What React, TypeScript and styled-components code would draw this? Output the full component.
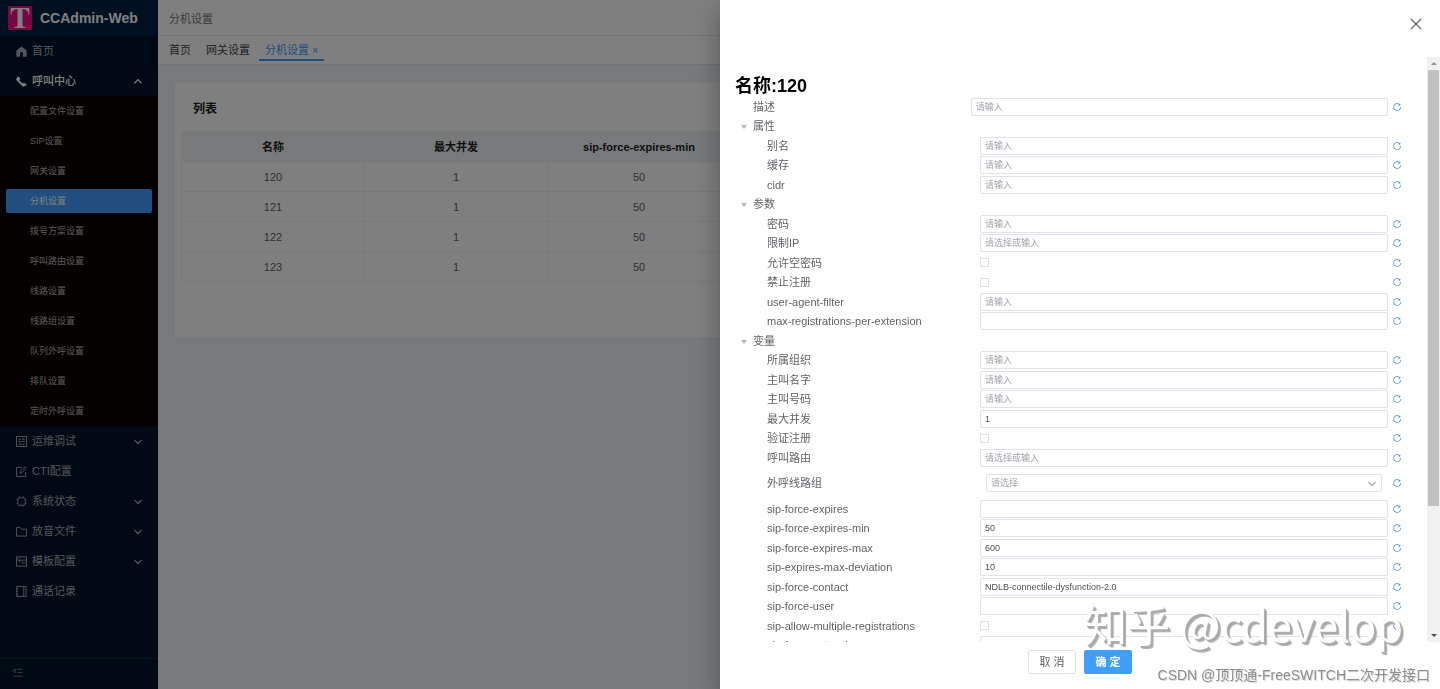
import React from "react";
import styled, { createGlobalStyle, css } from "styled-components";

const GlobalStyle = createGlobalStyle`
  *, *::before, *::after { box-sizing: border-box; }
  body {
    margin: 0;
    background: #f0f2f5;
    color: #606266;
    font: 11px/16px "Liberation Sans", "Noto Sans CJK SC", sans-serif;
  }
  button, input, select { font-family: inherit; }
  a { color: inherit; text-decoration: none; }
  ul { list-style: none; margin: 0; padding: 0; }
`;

/* ---------- application shell ---------- */

const Shell = styled.div`
  display: flex;
  height: 100vh;
  overflow: hidden;
`;

const Sidebar = styled.aside`
  display: flex;
  flex-direction: column;
  flex: none;
  width: 158px;
  background: #001529;
`;

const Brand = styled.div`
  display: flex;
  align-items: center;
  gap: 8px;
  height: 36px;
  padding-left: 8px;
  background: #002140;
  color: #fff;
  font-size: 14px;
  font-weight: 700;
`;

const Logo = styled.svg`
  width: 24px;
  height: 24px;
  background: #f00a88;
`;

const Menu = styled.nav`
  flex: 1;
`;

const MenuLink = styled.a<{ $open?: boolean }>`
  display: flex;
  align-items: center;
  gap: 5px;
  height: 30px;
  padding: 0 15px 0 16px;
  color: ${(p) => (p.$open ? "#fff" : "#a6acb3")};
  font-weight: ${(p) => (p.$open ? 500 : 400)};
`;

const MenuText = styled.span`
  flex: 1;
`;

const SubMenu = styled.ul`
  background: #0c0203;
`;

const SubItem = styled.li`
  height: 30px;
  padding: 3px 6px;
`;

const SubLink = styled.a<{ $active?: boolean }>`
  display: block;
  height: 24px;
  padding-left: 24px;
  border-radius: 2px;
  color: ${(p) => (p.$active ? "#fff" : "#b4b2b2")};
  background: ${(p) => (p.$active ? "#409eff" : "transparent")};
  font-size: 9px;
  line-height: 24px;
`;

const Collapse = styled.button`
  display: flex;
  align-items: center;
  height: 31px;
  padding: 0 12px 3px;
  border: 0;
  border-top: 1px solid #002c50;
  background: none;
  color: #5d7fa8;
`;

const Icon = styled.svg<{ $size?: number }>`
  flex: none;
  width: ${(p) => p.$size ?? 11}px;
  height: ${(p) => p.$size ?? 11}px;
  fill: none;
  stroke: currentColor;
  stroke-width: 1;
`;

const Main = styled.main`
  flex: 1;
  min-width: 0;
`;

const TopBar = styled.header`
  display: flex;
  align-items: center;
  height: 36px;
  padding: 2px 11px 0;
  border-bottom: 1px solid #ececec;
  background: #fff;
  color: #777;
`;

const TabBar = styled.nav`
  display: flex;
  gap: 3px;
  height: 29px;
  padding: 2px 5px 3px;
  border-bottom: 1px solid #e2e5e9;
  background: #fff;
`;

const Tab = styled.a<{ $active?: boolean }>`
  display: flex;
  align-items: center;
  gap: 3px;
  padding: 3px 6px 0;
  border-bottom: 2px solid ${(p) => (p.$active ? "#409eff" : "transparent")};
  color: ${(p) => (p.$active ? "#409eff" : "#444")};
`;

const TabClose = styled.span`
  font-size: 11px;
`;

const Card = styled.section`
  margin: 17px;
  min-height: 255px;
  padding: 15px 6px;
  background: #fff;
`;

const CardTitle = styled.h2`
  margin: 0 12px 10px;
  color: #222;
  font-size: 12px;
  font-weight: 700;
  line-height: 24px;
`;

const Table = styled.table`
  width: 100%;
  table-layout: fixed;
  border-collapse: collapse;
  text-align: center;
  th, td {
    height: 30px;
    padding: 0;
    border: 1px solid #f1f2f5;
  }
  th {
    background: #f0f2f5;
    color: #222;
  }
`;

const NarrowTh = styled.th`
  width: 183px;
`;

const Mask = styled.div`
  position: fixed;
  inset: 0;
  background: rgba(0, 0, 0, 0.5);
`;

/* ---------- drawer ---------- */

const Drawer = styled.form`
  position: fixed;
  inset: 0 0 0 auto;
  display: flex;
  flex-direction: column;
  width: 50%;
  background: #fff;
  box-shadow: 0 8px 10px -5px rgba(0, 0, 0, 0.2), 0 16px 24px 2px rgba(0, 0, 0, 0.14),
    0 6px 30px 5px rgba(0, 0, 0, 0.12);
`;

const DrawerHead = styled.header`
  display: flex;
  justify-content: flex-end;
  height: 57px;
  padding: 18px 18px 0;
`;

const IconButton = styled.button`
  display: flex;
  align-items: center;
  justify-content: center;
  flex: none;
  width: 12px;
  height: 12px;
  padding: 0;
  border: 0;
  background: none;
  color: #606266;
`;

const ResetButton = styled(IconButton)`
  width: 18px;
  height: 18px;
  color: #2f86d6;
`;

const DrawerBody = styled.div`
  display: flex;
  flex: 1;
  min-height: 0;
`;

const ScrollArea = styled.div`
  flex: 1;
  min-width: 0;
  overflow: hidden;
  padding: 17px 21px 0 15px;
`;

const Heading = styled.h1`
  margin: 0;
  color: #000;
  font-size: 18px;
  font-weight: 700;
  line-height: 24px;
`;

const Row = styled.div<{ $child?: boolean; $tall?: boolean }>`
  display: flex;
  align-items: center;
  height: 19px;
  padding-left: ${(p) => (p.$child ? 14 : 0)}px;
  &:nth-child(odd) { height: 20px; }
  ${Heading} + & { height: 18px; }
  ${(p) =>
    p.$tall &&
    css`
      &&& { height: 32px; }
    `}
`;

const Toggle = styled.span`
  display: flex;
  flex: none;
  justify-content: center;
  width: 18px;
  padding-top: 2px;
`;

const Caret = styled.i`
  border: 3px solid transparent;
  border-top: 4px solid #b4b6ba;
  border-bottom: 0;
`;

const Pair = styled.div`
  display: grid;
  grid-template-columns: 12fr 23fr;
  align-items: center;
  flex: 1;
  min-width: 0;
`;

const Label = styled.label`
  white-space: nowrap;
`;

const boxed = css`
  display: block;
  width: 100%;
  height: 18px;
  padding: 0 4px;
  border: 1px solid #dfe2e8;
  border-radius: 2px;
  outline: 0;
  background: #fff;
  color: #505256;
  font-size: 9px;
`;

const TextInput = styled.input`
  ${boxed}
  &::placeholder { color: #a0a3a9; opacity: 1; }
`;

const SelectWrap = styled.div`
  display: grid;
  align-items: center;
  margin: 0 6px;
  color: #a8abb2;
  > * { grid-area: 1 / 1; }
  > svg { justify-self: end; margin-right: 5px; pointer-events: none; z-index: 1; }
`;

const Select = styled.select`
  ${boxed}
  appearance: none;
  color: #a0a3a9;
`;

const Checkbox = styled.input`
  display: block;
  appearance: none;
  width: 9px;
  height: 9px;
  margin: 0;
  border: 1px solid #dcdfe6;
  border-radius: 1px;
  background: #fff;
`;

const ScrollBar = styled.div`
  display: flex;
  flex-direction: column;
  flex: none;
  width: 13px;
  background: #f1f1f1;
`;

const ScrollArrow = styled.span<{ $down?: boolean }>`
  display: flex;
  align-items: center;
  justify-content: center;
  height: 13px;
  &::before {
    content: "";
    border: 3px solid transparent;
    ${(p) =>
      p.$down
        ? "border-top-color: #505050; border-bottom: 0;"
        : "border-bottom-color: #909090; border-top: 0;"}
  }
`;

const ScrollTrack = styled.div`
  flex: 1;
  padding: 0 1px;
`;

const ScrollThumb = styled.div`
  height: 78%;
  background: #c1c1c1;
`;

const DrawerFoot = styled.footer`
  display: flex;
  justify-content: center;
  gap: 8px;
  height: 47px;
  padding-top: 8px;
`;

const Button = styled.button<{ $primary?: boolean }>`
  width: 48px;
  height: 24px;
  padding: 0;
  border: 1px solid ${(p) => (p.$primary ? "#409eff" : "#dcdfe6")};
  border-radius: 2px;
  background: ${(p) => (p.$primary ? "#409eff" : "#fff")};
  color: ${(p) => (p.$primary ? "#fff" : "#606266")};
  font-size: 11px;
  line-height: 20px;
  font-weight: ${(p) => (p.$primary ? 700 : 400)};
`;

/* ---------- watermarks ---------- */

const Watermark = styled.div`
  position: fixed;
  right: 37px;
  bottom: 36px;
  color: #fff;
  font: 43px/60px "Noto Sans CJK SC", sans-serif;
  text-shadow: 1px 1px 0 #b0b0b0, 2px 2px 0 #a8a8a8, 3px 3px 1px #b0b0b0;
  pointer-events: none;
`;

const Credit = styled.div`
  position: fixed;
  right: 10px;
  bottom: 4px;
  color: #8e8e8e;
  font: 14px/20px "Liberation Sans", "Noto Sans CJK SC", sans-serif;
  text-shadow: 1px 1px 0 #dcdcdc;
  pointer-events: none;
`;

/* ---------- icons ---------- */

const glyphs: Record<string, React.ReactNode> = {
  home: (
    <path fill="currentColor" stroke="none" d="M6 .5.4 5V11.700H4.500V8q0-1.500 1.500-1.500T7.500 8v3.700h4.100V5z" />
  ),
  phone: (
    <path
      fill="currentColor"
      stroke="none"
      d="M1.700.6.2 3.900q-.1.4.2.700l7 6.900q.3.200.6.100l3.500-1.500q.4-.3.100-.700L9.400 7.500q-.3-.3-.6-.1L7.100 8.300 3.700 4.800l.9-1.700q.1-.3-.1-.6L2.400.5q-.4-.3-.7.1z"
    />
  ),
  tools: (
    <>
      <rect x=".5" y=".5" width="11" height="11" />
      <path d="M2.500 3.500h3M7.500 2.500v2M7.500 3.500h2M2.500 6h2v1.500M6 6h3.500M2.500 9h4M8.500 8v2" />
    </>
  ),
  edit: (
    <>
      <path d="M6.500 1.500h-6v10h10v-5" />
      <path d="m4.500 7.800.3-2 4.900-4.900 1.500 1.500-4.800 4.900z" />
    </>
  ),
  cpu: (
    <>
      <rect x="2" y="2" width="8" height="8" rx="1.500" />
      <path d="M4 .5V2m4-1.500V2M4 10v1.500M8 10v1.500M.5 4H2M.5 8H2m8-4h1.500M10 8h1.500" />
    </>
  ),
  folder: <path d="M.5 1.500h4l1.500 2h5.500v7.500H.5z" />,
  template: (
    <>
      <rect x=".5" y="1" width="11" height="10" />
      <path d="M.5 4.500h11M4 4.500V7M2.500 2.500v1M6 7.500h4" />
    </>
  ),
  notebook: (
    <>
      <rect x="1" y=".5" width="10" height="11" />
      <path d="M8.500.5v11M0 3h2M0 6h2M0 9h2" />
    </>
  ),
  collapse: <path d="M5 2.500h6.500M6 6h5.500M1.500 10h10M3.500 2 1 4.200l2.500 2.200z" />,
  down: <path strokeWidth="1.400" d="m2.500 4.200 4 4 4-4" />,
  up: <path strokeWidth="1.400" d="m2.500 8 4-4 4 4" />,
  close: <path strokeWidth="1.200" d="m1 1 10 10M11 1 1 11" />,
};

const Glyph = ({ name, size }: { name: string; size?: number }) => (
  <Icon viewBox="0 0 12 12" $size={size} aria-hidden="true">
    {glyphs[name]}
  </Icon>
);

const Refresh = () => (
  <Icon viewBox="0 0 1024 1024" $size={10} aria-hidden="true">
    <path
      fill="currentColor"
      stroke="none"
      d="M784.512 230.272v-50.560a32 32 0 1 1 64 0v149.056a32 32 0 0 1-32 32H667.520a32 32 0 1 1 0-64h92.992A320 320 0 1 0 524.800 833.152a320 320 0 0 0 320-320h64a384 384 0 0 1-384 384 384 384 0 0 1-384-384 384 384 0 0 1 643.712-282.880z"
    />
  </Icon>
);

/* ---------- data ---------- */

const submenu = [
  "配置文件设置", "SIP设置", "网关设置", "分机设置", "拨号方案设置", "呼叫路由设置",
  "线路设置", "线路组设置", "队列外呼设置", "排队设置", "定时外呼设置",
];

const lowerMenu = [
  { icon: "tools", text: "运维调试", more: true },
  { icon: "edit", text: "CTI配置" },
  { icon: "cpu", text: "系统状态", more: true },
  { icon: "folder", text: "放音文件", more: true },
  { icon: "template", text: "模板配置", more: true },
  { icon: "notebook", text: "通话记录" },
];

type Field = {
  label: string;
  kind?: "group" | "check" | "select";
  top?: boolean;
  hint?: string;
  value?: string;
};

const INPUT = "请输入";
const PICK = "请选择或输入";

const fields: Field[] = [
  { label: "描述", top: true, hint: INPUT },
  { label: "属性", kind: "group" },
  { label: "别名", hint: INPUT },
  { label: "缓存", hint: INPUT },
  { label: "cidr", hint: INPUT },
  { label: "参数", kind: "group" },
  { label: "密码", hint: INPUT },
  { label: "限制IP", hint: PICK },
  { label: "允许空密码", kind: "check" },
  { label: "禁止注册", kind: "check" },
  { label: "user-agent-filter", hint: INPUT },
  { label: "max-registrations-per-extension" },
  { label: "变量", kind: "group" },
  { label: "所属组织", hint: INPUT },
  { label: "主叫名字", hint: INPUT },
  { label: "主叫号码", hint: INPUT },
  { label: "最大并发", value: "1" },
  { label: "验证注册", kind: "check" },
  { label: "呼叫路由", hint: PICK },
  { label: "外呼线路组", kind: "select" },
  { label: "sip-force-expires" },
  { label: "sip-force-expires-min", value: "50" },
  { label: "sip-force-expires-max", value: "600" },
  { label: "sip-expires-max-deviation", value: "10" },
  { label: "sip-force-contact", value: "NDLB-connectile-dysfunction-2.0" },
  { label: "sip-force-user" },
  { label: "sip-allow-multiple-registrations", kind: "check" },
  { label: "sip-force-extension" },
];

const Control = ({ field, id }: { field: Field; id: string }) => {
  if (field.kind === "check") return <Checkbox id={id} type="checkbox" />;
  if (field.kind === "select")
    return (
      <SelectWrap>
        <Select id={id}>
          <option>请选择</option>
        </Select>
        <Glyph name="down" size={11} />
      </SelectWrap>
    );
  return <TextInput id={id} placeholder={field.hint} defaultValue={field.value} />;
};

const FieldRow = ({ field, id }: { field: Field; id: string }) => {
  if (field.kind === "group")
    return (
      <Row>
        <Toggle><Caret /></Toggle>
        <span>{field.label}</span>
      </Row>
    );
  return (
    <Row $child={!field.top} $tall={field.kind === "select"}>
      <Toggle />
      <Pair>
        <Label htmlFor={id}>{field.label}</Label>
        <Control field={field} id={id} />
      </Pair>
      <ResetButton type="button" aria-label="重置"><Refresh /></ResetButton>
    </Row>
  );
};

export default function App() {
  return (
    <>
      <GlobalStyle />
      <Shell>
        <Sidebar>
          <Brand>
            <Logo viewBox="0 0 24 24" aria-hidden="true">
              <path
                fill="#fff"
                d="M3 2h18l.6 6.500h-1C20 4.500 18.500 3.300 14.500 3.200v15.300c0 2 .8 2.400 3 2.500v1h-11v-1c2.200-.1 3-.5 3-2.500V3.200C5.500 3.300 4 4.500 3.400 8.500h-1z"
              />
            </Logo>
            CCAdmin-Web
          </Brand>
          <Menu>
            <MenuLink href="#home"><Glyph name="home" /><MenuText>首页</MenuText></MenuLink>
            <MenuLink href="#call" $open>
              <Glyph name="phone" /><MenuText>呼叫中心</MenuText><Glyph name="up" />
            </MenuLink>
            <SubMenu>
              {submenu.map((text) => (
                <SubItem key={text}>
                  <SubLink href="#sub" $active={text === "分机设置"}>{text}</SubLink>
                </SubItem>
              ))}
            </SubMenu>
            {lowerMenu.map((m) => (
              <MenuLink key={m.text} href="#menu">
                <Glyph name={m.icon} />
                <MenuText>{m.text}</MenuText>
                {m.more && <Glyph name="down" />}
              </MenuLink>
            ))}
          </Menu>
          <Collapse type="button" aria-label="折叠菜单"><Glyph name="collapse" /></Collapse>
        </Sidebar>
        <Main>
          <TopBar>分机设置</TopBar>
          <TabBar>
            <Tab href="#home">首页</Tab>
            <Tab href="#gateway">网关设置</Tab>
            <Tab href="#ext" $active>分机设置<TabClose>×</TabClose></Tab>
          </TabBar>
          <Card>
            <CardTitle>列表</CardTitle>
            <Table>
              <thead>
                <tr>
                  <NarrowTh>名称</NarrowTh>
                  <NarrowTh>最大并发</NarrowTh>
                  <NarrowTh>sip-force-expires-min</NarrowTh>
                  <th />
                </tr>
              </thead>
              <tbody>
                {["120", "121", "122", "123"].map((n) => (
                  <tr key={n}>
                    <td>{n}</td>
                    <td>1</td>
                    <td>50</td>
                    <td />
                  </tr>
                ))}
              </tbody>
            </Table>
          </Card>
        </Main>
      </Shell>
      <Mask />
      <Drawer>
        <DrawerHead>
          <IconButton type="button" aria-label="关闭"><Glyph name="close" size={12} /></IconButton>
        </DrawerHead>
        <DrawerBody>
          <ScrollArea>
            <Heading>名称:120</Heading>
            {fields.map((f, i) => (
              <FieldRow key={f.label} field={f} id={`field-${i}`} />
            ))}
          </ScrollArea>
          <ScrollBar aria-hidden="true">
            <ScrollArrow />
            <ScrollTrack><ScrollThumb /></ScrollTrack>
            <ScrollArrow $down />
          </ScrollBar>
        </DrawerBody>
        <DrawerFoot>
          <Button type="button">取 消</Button>
          <Button type="button" $primary>确 定</Button>
        </DrawerFoot>
      </Drawer>
      <Watermark>知乎 @cdevelop</Watermark>
      <Credit>CSDN @顶顶通-FreeSWITCH二次开发接口</Credit>
    </>
  );
}
